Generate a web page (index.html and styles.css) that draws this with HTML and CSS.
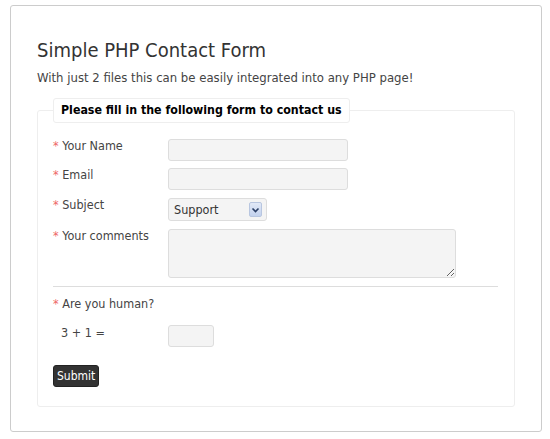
FILE: index.html
```html
<!DOCTYPE html>
<html>
<head>
<meta charset="utf-8">
<title>Simple PHP Contact Form</title>
<link rel="stylesheet" href="styles.css">
</head>
<body>
<div class="page">
  <div class="box">
    <h1 class="title">Simple PHP Contact Form</h1>
    <p class="intro">With just 2 files this can be easily integrated into any PHP page!</p>
    <form class="form">
      <fieldset class="fs">
        <legend class="legend">Please fill in the following form to contact us</legend>
        <div class="row first">
          <label class="lbl"><span class="req">*</span> Your Name</label>
          <input class="inp" type="text">
        </div>
        <div class="row">
          <label class="lbl"><span class="req">*</span> Email</label>
          <input class="inp" type="text">
        </div>
        <div class="row">
          <label class="lbl"><span class="req">*</span> Subject</label>
          <div class="selwrap">
            <select class="sel"><option>Support</option></select>
            <span class="arrow"><svg width="9" height="6" viewBox="0 0 9 6"><path d="M1.5 1.5 L4.5 4.5 L7.5 1.5" fill="none" stroke="#2b3f66" stroke-width="1.6"/></svg></span>
          </div>
        </div>
        <div class="row">
          <label class="lbl"><span class="req">*</span> Your comments</label>
          <textarea class="ta"></textarea>
        </div>
        <hr class="sep">
        <div class="human"><span class="req">*</span> Are you human?</div>
        <div class="row captcha">
          <label class="lbl sum">3 + 1 =</label>
          <input class="inp small" type="text">
        </div>
        <button class="btn" type="button">Submit</button>
      </fieldset>
    </form>
  </div>
</div>
</body>
</html>
```
FILE: styles.css
```css
html, body {
  margin: 0;
  padding: 0;
  background: #fff;
}
body {
  font-family: "DejaVu Sans Condensed", "DejaVu Sans", sans-serif;
  font-size: 12px;
  color: #444;
}
.page {
  padding: 5px 8px 0 10px;
}
.box {
  width: 532px;
  height: 427px;
  box-sizing: border-box;
  border: 1px solid #ccc;
  border-radius: 3px;
  padding: 32px 26px 0 26px;
}
.title {
  margin: 0;
  font-size: 20px;
  font-weight: normal;
  line-height: 24px;
  color: #333;
}
.intro {
  margin: 8px 0 0 0;
  line-height: 16px;
  font-size: 13px;
}
.form {
  margin: 12px 0 0 0;
}
.fs {
  margin: 0;
  width: 478px;
  box-sizing: border-box;
  border: 1px solid #eee;
  border-radius: 3px;
  padding: 16px 16px 19px 15px;
}
.legend {
  margin: 0;
  padding: 4px 7px 5px 7px;
  border: 1px solid #eee;
  border-radius: 3px;
  font-weight: bold;
  font-size: 12.3px;
  color: #000;
  line-height: 14px;
}
.row {
  display: grid;
  grid-template-columns: 115px auto;
  align-items: start;
  margin-bottom: 8px;
}
.row.first {
  margin-bottom: 7px;
}
.lbl {
  line-height: 14px;
  padding-top: 0;
  font-size: 12.5px;
}
.req {
  color: #e66;
}
.inp {
  width: 180px;
  height: 22px;
  box-sizing: border-box;
  border: 1px solid #ddd;
  border-radius: 3px;
  background: #f4f4f4;
  margin: 0;
  padding: 2px 4px;
  font: inherit;
}
.selwrap {
  position: relative;
  width: 99px;
  height: 23px;
}
.sel {
  -webkit-appearance: none;
  appearance: none;
  width: 99px;
  height: 23px;
  box-sizing: border-box;
  border: 1px solid #ddd;
  border-radius: 3px;
  background: #f4f4f4;
  margin: 0;
  padding: 2px 5px;
  font-family: inherit;
  font-size: 12.5px;
  color: #333;
}
.arrow {
  position: absolute;
  right: 5px;
  top: 4px;
  width: 13px;
  height: 15px;
  box-sizing: border-box;
  border: 1px solid #b8c6e0;
  border-radius: 2px;
  background: linear-gradient(#e2e9f7, #c3d2ee);
  display: flex;
  align-items: center;
  justify-content: center;
}
.ta {
  display: block;
  width: 288px;
  height: 49px;
  box-sizing: border-box;
  border: 1px solid #ddd;
  border-radius: 3px;
  background: #f4f4f4;
  margin: 0;
  font: inherit;
}
.sep {
  margin: 8px 0 0 0;
  border: 0;
  border-top: 1px solid #ddd;
  height: 0;
}
.human {
  margin-top: 10px;
  line-height: 14px;
  font-size: 12.5px;
}
.captcha {
  margin-top: 14px;
}
.sum {
  padding-left: 8px;
  padding-top: 1px;
}
.small {
  width: 46px;
}
.btn {
  display: block;
  margin-top: 18px;
  background: #333;
  color: #fff;
  border: 1px solid #222;
  border-radius: 3px;
  font-family: "DejaVu Sans Condensed", "DejaVu Sans", sans-serif;
  font-size: 12px;
  padding: 3px 3px;
  line-height: 14px;
  height: 22px;
}
```
